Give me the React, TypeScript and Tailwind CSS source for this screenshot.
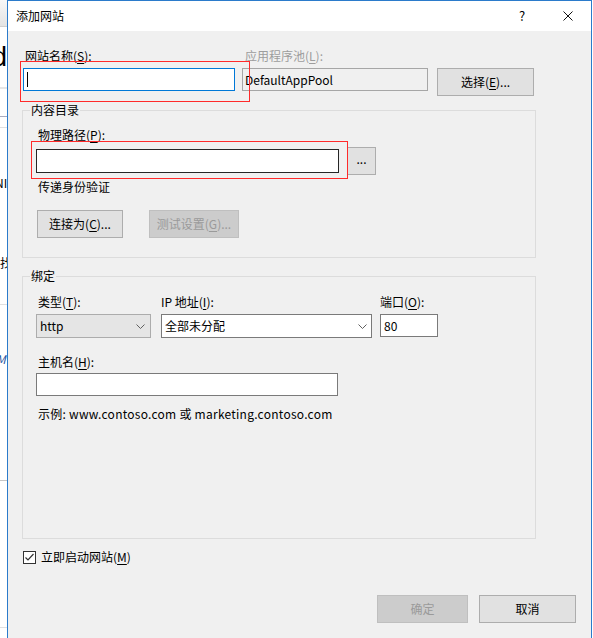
import React from "react";

// Windows-style "Add Website" dialog, drawn over the edge of the IIS manager window.

function Mn({ k }: { k: string }) {
  return <span className="underline underline-offset-[2px] decoration-[1px]">{k}</span>;
}

function Chevron() {
  return (
    <svg width="9" height="5" viewBox="0 0 9 5" className="shrink-0">
      <polyline points="0.5,0.5 4.5,4.5 8.5,0.5" fill="none" stroke="#606060" strokeWidth="1" />
    </svg>
  );
}

function Btn({ children, w, disabled = false }: { children: React.ReactNode; w: string; disabled?: boolean }) {
  return (
    <div
      className={
        "flex h-[28px] items-center justify-center border " +
        w +
        (disabled ? " border-[#bfbfbf] bg-[#cccccc] text-[#9a9a9a]" : " border-[#adadad] bg-[#e1e1e1] text-black")
      }
    >
      {children}
    </div>
  );
}

// sliver of the main window still visible left of the dialog
function BackWindow() {
  return (
    <div className="flex w-[7px] shrink-0 flex-col overflow-hidden bg-white text-black">
      <div className="h-[26px] bg-gradient-to-b from-[#f7f7f7] to-[#e4e4e4]" />
      <div className="h-[1px] bg-[#d0d0d0]" />
      <div className="flex h-[60px] items-center">
        <span className="-ml-[8px] font-['Liberation_Sans',sans-serif] text-[27px] leading-[27px]">d</span>
      </div>
      <div className="h-[2px] bg-[#e6e6e6]" />
      <div className="h-[27px]" />
      <div className="h-[1px] bg-[#a9abbf]" />
      <div className="h-[10px]" />
      <div className="h-[1px] bg-[#e0e0e0]" />
      <div className="h-[47px]" />
      <div className="flex h-[16px] items-center">
        <span className="-ml-[5px] text-[12px] leading-[16px]">NI</span>
      </div>
      <div className="h-[64px]" />
      <div className="flex h-[16px] items-center">
        <span className="text-[12px] leading-[16px]">找</span>
      </div>
      <div className="h-[33px]" />
      <div className="h-[1px] bg-[#e0e0e0]" />
      <div className="h-[46px]" />
      <div className="flex h-[16px] items-center">
        <span className="-ml-[4px] text-[12px] italic leading-[16px] text-[#1d4f9c]">M</span>
      </div>
      <div className="h-[113px]" />
      <div className="h-[1px] bg-[#c6c6c6]" />
      <div className="h-[146px]" />
      <div className="h-[1px] bg-[#e0e0e0]" />
    </div>
  );
}

export default function App() {
  return (
    <div className="flex h-[638px] w-[593px] overflow-hidden bg-white font-['Noto_Sans_CJK_SC','Noto_Sans',sans-serif] text-[12px] leading-[16px] text-black">
      <BackWindow />

      <div className="flex h-[660px] w-[585px] shrink-0 flex-col border-x border-t border-[#2b7bcb]">
        {/* title bar */}
        <div className="flex h-[30px] shrink-0 items-center bg-white">
          <span className="pl-[8px]">添加网站</span>
          <div className="ml-auto flex h-full w-[46px] items-center justify-center text-[13px]">?</div>
          <div className="flex h-full w-[46px] items-center justify-center">
            <svg width="10" height="10" viewBox="0 0 10 10">
              <path d="M0.5 0.5 L9.5 9.5 M9.5 0.5 L0.5 9.5" stroke="#111" strokeWidth="1" />
            </svg>
          </div>
        </div>

        <div className="relative flex flex-1 flex-col bg-[#f0f0f0] pt-[17px]">
          {/* site name / app pool */}
          <div className="flex items-start">
            <div className="ml-[15px] flex w-[212px] flex-col">
              <span className="pl-[2px]">
                网站名称(<Mn k="S" />):
              </span>
              <div className="mt-[4px] flex h-[23px] items-center border border-[#0078d7] bg-white">
                <div className="ml-[3px] h-[15px] w-[1px] bg-black" />
              </div>
            </div>
            <div className="ml-[7px] flex w-[186px] flex-col">
              <span className="pl-[3px] text-[#9d9d9d]">
                应用程序池(<Mn k="L" />):
              </span>
              <div className="mt-[4px] flex h-[23px] items-center border border-[#a6a6a6] bg-[#f0f0f0] pl-[2px]">
                DefaultAppPool
              </div>
            </div>
            <div className="ml-[9px] mt-[20px]">
              <Btn w="w-[97px]">
                选择(<Mn k="E" />)...
              </Btn>
            </div>
          </div>

          {/* content directory */}
          <fieldset className="ml-[14px] mt-[6px] h-[156px] w-[514px] border border-[#dcdcdc]">
            <legend className="ml-[7px] px-[1px]">内容目录</legend>
            <span className="ml-[15px] mt-[9px] block">
              物理路径(<Mn k="P" />):
            </span>
            <div className="mt-[4px] flex items-center">
              <div className="ml-[13px] h-[24px] w-[303px] border border-[#262626] bg-white" />
              <div className="ml-[8px] flex h-[28px] w-[29px] items-center justify-center border border-[#adadad] bg-[#e1e1e1] pb-[4px]">
                ...
              </div>
            </div>
            <span className="ml-[15px] mt-[4px] block">传递身份验证</span>
            <div className="mt-[15px] flex">
              <div className="ml-[14px]">
                <Btn w="w-[86px]">
                  连接为(<Mn k="C" />)...
                </Btn>
              </div>
              <div className="ml-[26px]">
                <Btn w="w-[90px]" disabled>
                  测试设置(<Mn k="G" />)...
                </Btn>
              </div>
            </div>
          </fieldset>

          {/* bindings */}
          <fieldset className="ml-[14px] mt-[10px] h-[271px] w-[514px] border border-[#dcdcdc]">
            <legend className="ml-[7px] px-[1px]">绑定</legend>
            <div className="mt-[10px] flex items-start">
              <div className="ml-[13px] flex w-[115px] flex-col">
                <span className="pl-[2px]">
                  类型(<Mn k="T" />):
                </span>
                <div className="mt-[4px] flex h-[24px] items-center justify-between border border-[#acacac] bg-[#e5e5e5] pl-[3px] pr-[5px]">
                  <span>http</span>
                  <Chevron />
                </div>
              </div>
              <div className="ml-[10px] flex w-[211px] flex-col">
                <span>
                  IP 地址(<Mn k="I" />):
                </span>
                <div className="mt-[4px] flex h-[24px] items-center justify-between border border-[#7a7a7a] bg-white pl-[3px] pr-[4px]">
                  <span>全部未分配</span>
                  <Chevron />
                </div>
              </div>
              <div className="ml-[8px] flex w-[58px] flex-col">
                <span>
                  端口(<Mn k="O" />):
                </span>
                <div className="mt-[4px] flex h-[23px] items-center border border-[#7a7a7a] bg-white pl-[3px]">80</div>
              </div>
            </div>
            <span className="ml-[15px] mt-[16px] block">
              主机名(<Mn k="H" />):
            </span>
            <div className="ml-[13px] mt-[3px] h-[23px] w-[302px] border border-[#7a7a7a] bg-white" />
            <span className="ml-[15px] mt-[10px] block tracking-[0.25px]">
              示例: www.contoso.com 或 marketing.contoso.com
            </span>
          </fieldset>

          {/* start immediately */}
          <div className="ml-[15px] mt-[10px] flex h-[16px] items-center">
            <div className="flex h-[13px] w-[13px] items-center justify-center border border-[#333333] bg-white">
              <svg width="11" height="11" viewBox="0 0 11 11">
                <polyline points="1.5,5.5 4,8 9.5,2" fill="none" stroke="#333" strokeWidth="1.2" />
              </svg>
            </div>
            <span className="ml-[5px]">
              立即启动网站(<Mn k="M" />)
            </span>
          </div>

          <div className="mt-[30px] flex justify-end gap-[11px] pr-[15px]">
            <Btn w="w-[91px]" disabled>
              确定
            </Btn>
            <Btn w="w-[97px]">取消</Btn>
          </div>

          {/* red highlight frames around the required fields */}
          <div className="pointer-events-none absolute left-[12px] top-[30px] h-[41px] w-[230px] border border-solid border-[#ff2a2a]" />
          <div className="pointer-events-none absolute left-[23px] top-[110px] h-[38px] w-[317px] border border-solid border-[#ff2a2a]" />
        </div>
      </div>
    </div>
  );
}
